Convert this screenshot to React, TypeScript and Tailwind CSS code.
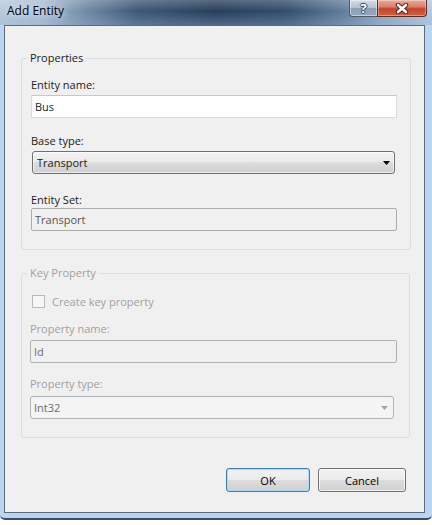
import React from "react";

// small triangle used by the combo boxes
const DropArrow = ({ color }: { color: string }) => (
  <svg width="7" height="4" viewBox="0 0 7 4">
    <polygon points="0,0 7,0 3.5,4" fill={color} />
  </svg>
);

const App = () => {
  return (
    <div className="w-[432px] h-[525px] bg-white [font-family:'Open_Sans',sans-serif] text-[11px] leading-[15px] text-[#1b1b1b]">
      {/* Window frame */}
      <div className="flex flex-col w-[432px] h-[520px] bg-[#b9d5f1] border-b-2 border-[#3f4e5e] rounded-bl-[5px] rounded-br-[5px]">
        {/* Title bar */}
        <div className="flex h-[25px] shrink-0 bg-[linear-gradient(180deg,rgba(255,255,255,0.22)_0%,rgba(255,255,255,0)_45%,rgba(150,180,212,0.35)_100%),linear-gradient(90deg,#b8cadc_0%,#a8bdd2_10%,#7089a5_20%,#3d5775_32%,#283f5c_50%,#324c6b_66%,#5b7795_78%,#8ea6bf_88%,#b4c9de_100%)]">
          <div className="pl-[7px] pt-[3px] text-[12px] leading-[16px] text-black [text-shadow:0_0_6px_rgba(255,255,255,0.9)]">
            Add Entity
          </div>
          <div className="flex ml-auto mr-[5px] h-[17px]">
            <div className="flex items-center justify-center w-[28px] h-[17px] border border-t-0 border-r-0 border-[#4d5b69] rounded-bl-[4px] bg-[linear-gradient(180deg,#d3dde8_0%,#b2c2d3_48%,#8c9fb5_52%,#93a8bf_100%)] shadow-[inset_0_0_0_1px_rgba(255,255,255,0.45)]">
              <span className="text-[13px] leading-[13px] font-bold text-white [text-shadow:1px_0_0_#3b4855,-1px_0_0_#3b4855,0_1px_0_#3b4855,0_-1px_0_#3b4855]">
                ?
              </span>
            </div>
            <div className="flex items-center justify-center w-[50px] h-[17px] border border-t-0 border-[#5a2e25] rounded-br-[4px] bg-[linear-gradient(180deg,#e8ab9c_0%,#d8806a_42%,#c5432a_55%,#d4613f_100%)] shadow-[inset_0_0_0_1px_rgba(255,255,255,0.35)]">
              <svg width="14" height="11" viewBox="0 0 14 11">
                <path d="M3 2 L11 9 M11 2 L3 9" stroke="#4a2019" strokeWidth="4.5" strokeLinecap="round" />
                <path d="M3 2 L11 9 M11 2 L3 9" stroke="#ffffff" strokeWidth="2.6" strokeLinecap="round" />
              </svg>
            </div>
          </div>
        </div>

        {/* Client area */}
        <div className="pl-[4px] pr-[7px]">
          <div className="w-[421px] h-[488px] border border-[#5b6b7c] bg-[#f0f0f0] pt-[25px] pl-[16px]">
            {/* Properties */}
            <fieldset className="w-[390px] border border-[#d5dfe5] rounded-[3px]">
              <legend className="ml-[5px] px-[3px] leading-[14px] text-[#1b1b1b]">Properties</legend>
              <div className="pl-[9px] pt-[12px] pb-[18px]">
                <div>Entity name:</div>
                <div className="mt-[3px] flex items-center w-[366px] h-[23px] bg-white border border-[#d6dce3] border-t-[#c3c9d1] pl-[3px]">
                  Bus
                </div>

                <div className="mt-[15px]">Base type:</div>
                <div className="mt-[3px] ml-[1px] flex items-center justify-between w-[363px] h-[23px] border border-[#707070] rounded-[3px] bg-[linear-gradient(180deg,#f2f2f2_0%,#ebebeb_50%,#dddddd_50%,#cfcfcf_100%)] shadow-[inset_0_0_0_1px_rgba(255,255,255,0.6)] pl-[4px] pr-[4px]">
                  <span>Transport</span>
                  <DropArrow color="#000000" />
                </div>

                <div className="mt-[18px]">Entity Set:</div>
                <div className="mt-[1px] flex items-center w-[366px] h-[23px] border border-[#acacac] rounded-[2px] pl-[3px] text-[#555555]">
                  Transport
                </div>
              </div>
            </fieldset>

            {/* Key Property (disabled) */}
            <fieldset className="mt-[16px] w-[389px] border border-[#d5dfe5] rounded-[3px] text-[#a0a0a0]">
              <legend className="ml-[5px] px-[3px] leading-[14px]">Key Property</legend>
              <div className="pl-[8px] pt-[15px] pb-[18px]">
                <div className="flex items-center h-[13px] ml-[2px]">
                  <div className="w-[13px] h-[13px] border border-[#b8b8b8] bg-[#f7f7f7]" />
                  <span className="ml-[7px]">Create key property</span>
                </div>

                <div className="mt-[13px]">Property name:</div>
                <div className="mt-[4px] flex items-center w-[367px] h-[23px] border border-[#b0b3b6] rounded-[2px] pl-[3px] text-[#6d6d6d]">
                  Id
                </div>

                <div className="mt-[13px]">Property type:</div>
                <div className="mt-[5px] flex items-center justify-between w-[364px] h-[23px] border border-[#b0b3b6] rounded-[3px] bg-[#f4f4f4] pl-[3px] pr-[5px] text-[#6d6d6d]">
                  <span>Int32</span>
                  <DropArrow color="#a3a3a3" />
                </div>
              </div>
            </fieldset>

            {/* Buttons */}
            <div className="flex justify-end gap-[8px] mt-[30px] mr-[18px]">
              <button className="w-[84px] h-[24px] border border-[#3c7fb1] rounded-[3px] bg-[linear-gradient(180deg,#f2f2f2_0%,#ebebeb_50%,#dddddd_50%,#cfcfcf_100%)] shadow-[inset_0_0_0_1px_#a8dcf7] text-black text-[11px]">
                OK
              </button>
              <button className="w-[88px] h-[24px] border border-[#707070] rounded-[3px] bg-[linear-gradient(180deg,#f2f2f2_0%,#ebebeb_50%,#dddddd_50%,#cfcfcf_100%)] shadow-[inset_0_0_0_1px_rgba(255,255,255,0.7)] text-black text-[11px]">
                Cancel
              </button>
            </div>
          </div>
        </div>
      </div>
    </div>
  );
};

export default App;
